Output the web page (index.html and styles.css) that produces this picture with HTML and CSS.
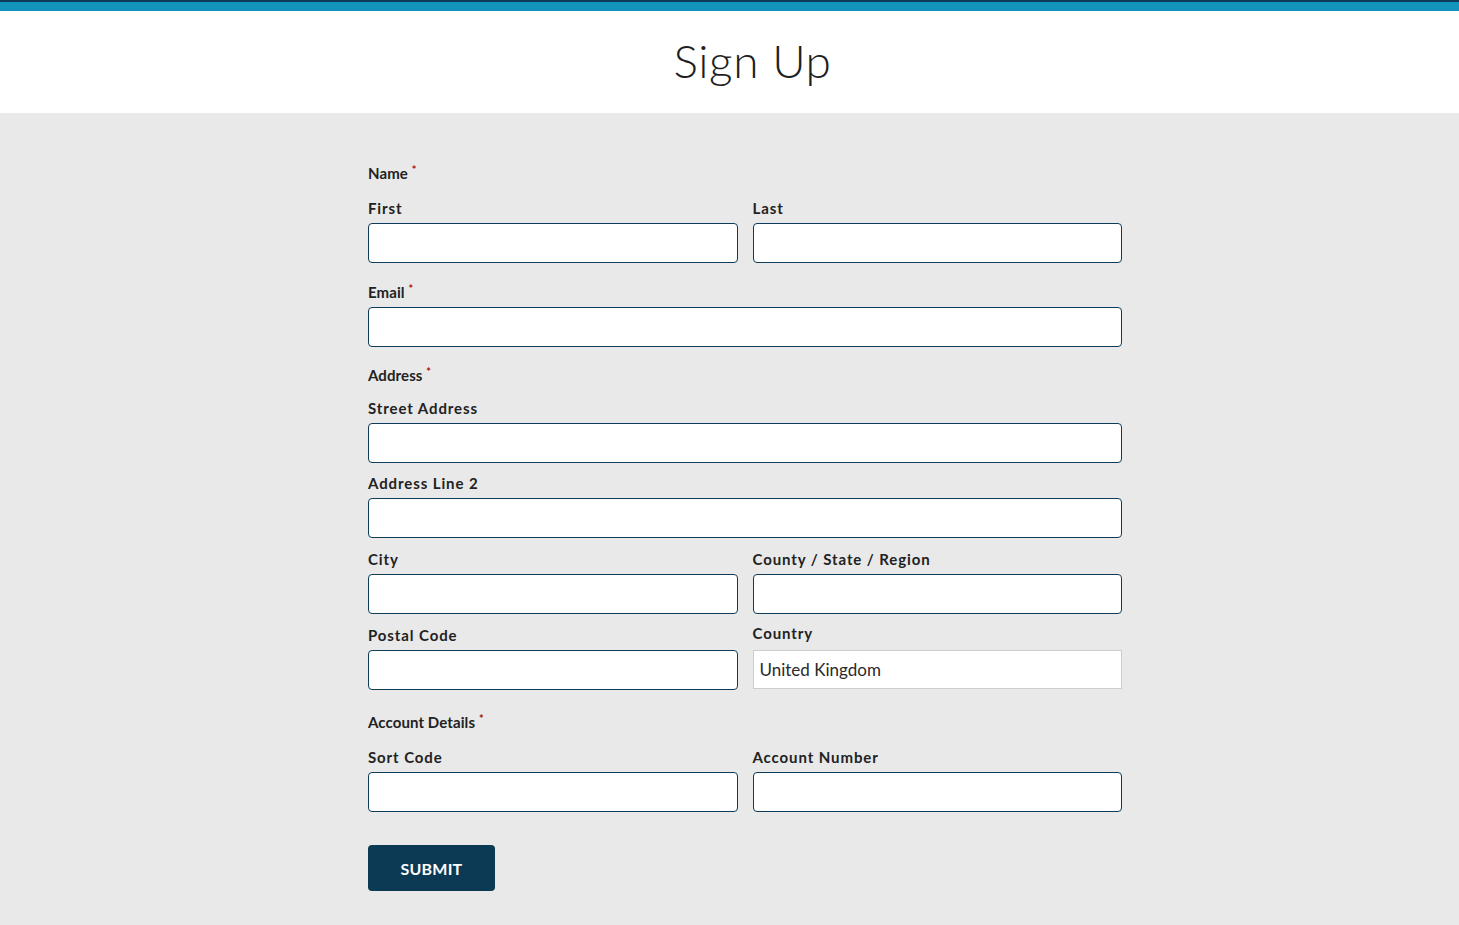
FILE: index.html
```html
<!DOCTYPE html>
<html lang="en">
<head>
<meta charset="utf-8">
<title>Sign Up</title>
<link rel="stylesheet" href="styles.css">
</head>
<body>
<div class="topbar"></div>
<header class="header">
  <h1 class="title">Sign Up</h1>
</header>
<main class="main">
  <form class="form">
    <div class="group group-name">
      <div class="legend">Name <span class="req">*</span></div>
      <div class="row">
        <div class="field">
          <label class="label">First</label>
          <input class="input" type="text">
        </div>
        <div class="field">
          <label class="label">Last</label>
          <input class="input" type="text">
        </div>
      </div>
    </div>
    <div class="group group-email">
      <div class="field">
        <label class="legend legend-tight">Email <span class="req">*</span></label>
        <input class="input" type="text">
      </div>
    </div>
    <div class="group group-address">
      <div class="legend legend-address">Address <span class="req">*</span></div>
      <div class="stack">
        <div class="field">
          <label class="label">Street Address</label>
          <input class="input" type="text">
        </div>
        <div class="field">
          <label class="label">Address Line 2</label>
          <input class="input" type="text">
        </div>
        <div class="row">
          <div class="field">
            <label class="label">City</label>
            <input class="input" type="text">
          </div>
          <div class="field">
            <label class="label">County / State / Region</label>
            <input class="input" type="text">
          </div>
        </div>
        <div class="row">
          <div class="field">
            <label class="label">Postal Code</label>
            <input class="input" type="text">
          </div>
          <div class="field">
            <label class="label label-country">Country</label>
            <div class="select">United Kingdom</div>
          </div>
        </div>
      </div>
    </div>
    <div class="group group-account">
      <div class="legend">Account Details <span class="req">*</span></div>
      <div class="row">
        <div class="field">
          <label class="label">Sort Code</label>
          <input class="input" type="text">
        </div>
        <div class="field">
          <label class="label">Account Number</label>
          <input class="input" type="text">
        </div>
      </div>
    </div>
    <button class="submit" type="button">Submit</button>
  </form>
</main>
</body>
</html>
```
FILE: styles.css
```css
* { box-sizing: border-box; }
html, body {
  margin: 0;
  padding: 0;
}
body {
  font-family: Lato, "Open Sans", "Liberation Sans", sans-serif;
  color: #222;
  background: #e9e9e9;
  min-height: 925px;
}
.topbar {
  height: 11px;
  background: #1394bc;
  border-top: 2px solid #0e3b59;
}
.header {
  height: 102px;
  background: #fff;
  display: flex;
  align-items: center;
  justify-content: center;
}
.title {
  margin: 0 0 2px 46px;
  font-weight: 300;
  font-size: 46px;
  line-height: 1;
  color: #1f1f1f;
  letter-spacing: 0.6px;
}
.main {
  background: #e9e9e9;
  padding: 50px 0 34px;
}
.form {
  width: 754px;
  margin-left: 368px;
}
.group-name { margin-bottom: 19px; }
.group-email { margin-bottom: 18px; }
.group-address { margin-bottom: 22px; }
.group-account { margin-bottom: 33px; }
.legend {
  display: block;
  font-size: 15px;
  line-height: 20px;
  height: 20px;
  font-weight: 700;
  color: #222;
  margin-bottom: 15px;
  letter-spacing: 0.1px;
}
.legend-tight { margin-bottom: 5px; }
.legend-address { margin-bottom: 13px; }
.req {
  color: #a80f0f;
  font-size: 11px;
  line-height: 0;
  vertical-align: 5px;
  margin-left: 0;
}
.row {
  display: grid;
  grid-template-columns: 1fr 1fr;
  column-gap: 15px;
}
.stack {
  display: flex;
  flex-direction: column;
  gap: 10px;
}
.stack > .row {
  margin-top: 1px;
}
.field {
  display: flex;
  flex-direction: column;
}
.label {
  font-size: 15px;
  line-height: 20px;
  height: 20px;
  font-weight: 700;
  color: #222;
  letter-spacing: 0.9px;
  margin-bottom: 5px;
}
.label-country {
  margin-top: -2px;
  margin-bottom: 7px;
}
.input {
  height: 40px;
  width: 100%;
  border: 1px solid #0e3b59;
  border-radius: 4px;
  background: #fff;
  font: inherit;
  padding: 0 8px;
}
.select {
  height: 39px;
  width: 100%;
  border: 1px solid #cdcdcd;
  background: #fff;
  display: flex;
  align-items: center;
  padding-left: 6px;
  font-size: 17px;
  font-weight: 400;
  color: #2a2a2a;
}
.submit {
  display: block;
  width: 127px;
  height: 46px;
  border: none;
  border-radius: 4px;
  background: #0c3a55;
  color: #fff;
  font-family: inherit;
  font-size: 16px;
  font-weight: 700;
  text-transform: uppercase;
  letter-spacing: 0.2px;
  padding: 0;
}
```
